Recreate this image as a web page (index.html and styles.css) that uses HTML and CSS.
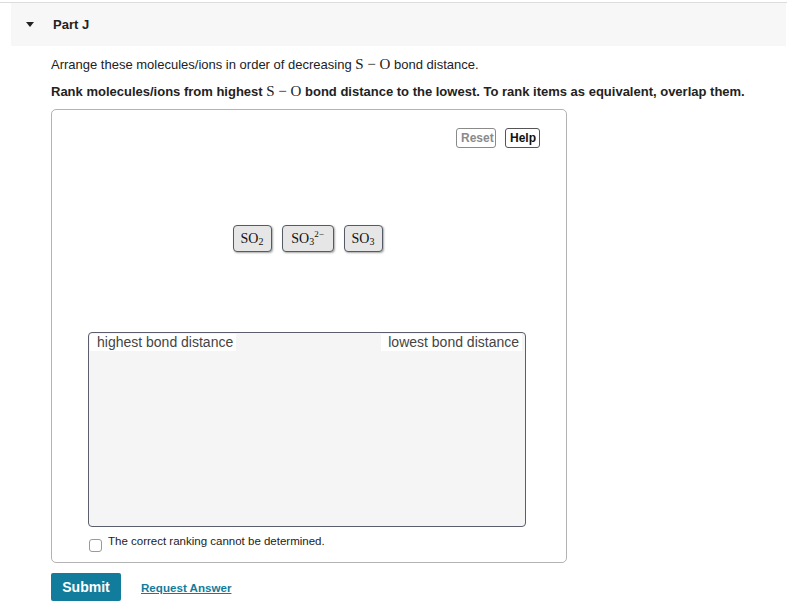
FILE: index.html
```html
<!DOCTYPE html>
<html>
<head>
<meta charset="utf-8">
<link rel="stylesheet" href="styles.css">
</head>
<body>
<div class="part">
  <div class="part-header">
    <span class="caret"></span>
    <span class="part-title">Part J</span>
  </div>
  <div class="part-body">
    <p class="prompt">Arrange these molecules/ions in order of decreasing <span class="math">S − O</span> bond distance.</p>
    <p class="instr">Rank molecules/ions from highest <span class="math">S − O</span> bond distance to the lowest. To rank items as equivalent, overlap them.</p>
    <div class="panel">
      <div class="tools">
        <button class="tool reset">Reset</button>
        <button class="tool help">Help</button>
      </div>
      <div class="tiles">
        <div class="tile w40"><span>SO<sub>2</sub></span></div>
        <div class="tile w53"><span>SO<sub>3</sub><sup>2−</sup></span></div>
        <div class="tile w40"><span>SO<sub>3</sub></span></div>
      </div>
      <div class="rank">
        <div class="rank-labels">
          <span class="lbl">highest bond distance</span>
          <span class="lbl">lowest bond distance</span>
        </div>
      </div>
      <label class="check">
        <span class="box"></span>
        <span>The correct ranking cannot be determined.</span>
      </label>
    </div>
    <div class="actions">
      <button class="submit">Submit</button>
      <a class="request" href="#">Request Answer</a>
    </div>
  </div>
</div>
</body>
</html>
```
FILE: styles.css
```css
html, body {
  margin: 0;
  padding: 0;
  background: #fff;
  font-family: "Liberation Sans", Arial, sans-serif;
  color: #222;
}
body {
  padding-top: 2px;
}
.part {
  border-top: 1px solid #dcdcdc;
}
.part-header {
  margin-left: 11px;
  margin-right: 1px;
  height: 43px;
  background: #f7f7f7;
  display: flex;
  align-items: center;
  padding-left: 15px;
}
.caret {
  width: 0;
  height: 0;
  border-left: 4.5px solid transparent;
  border-right: 4.5px solid transparent;
  border-top: 5px solid #222;
}
.part-title {
  margin-left: 19px;
  font-weight: bold;
  font-size: 13px;
  color: #222;
  margin-top: -1px;
}
.part-body {
  padding-left: 51px;
}
.prompt {
  margin: 10px 0 0 0;
  font-size: 13px;
  line-height: 16px;
  color: #222;
}
.instr {
  margin: 10px 0 0 0;
  font-size: 13px;
  line-height: 16px;
  font-weight: bold;
  color: #222;
}
.math {
  font-family: "Liberation Serif", "Times New Roman", serif;
  font-weight: normal;
  font-size: 15px;
}
.panel {
  margin-top: 9px;
  width: 514px;
  height: 452px;
  border: 1px solid #b3b3b3;
  border-radius: 5px;
  display: flex;
  flex-direction: column;
}
.tools {
  display: flex;
  justify-content: flex-end;
  gap: 9px;
  padding: 18px 26px 0 0;
}
.tool {
  font-family: "Liberation Sans", Arial, sans-serif;
  font-weight: bold;
  font-size: 12px;
  height: 20px;
  padding: 0 4px;
  background: #fff;
  border-radius: 3px;
  line-height: 17px;
}
.reset {
  color: #8a8a8a;
  border: 1px solid #8a8a8a;
  width: 40px;
}
.help {
  color: #111;
  border: 1px solid #555;
  width: 35px;
}
.tiles {
  display: flex;
  justify-content: center;
  gap: 10px;
  margin-top: 77px;
  padding-right: 3px;
}
.tile {
  height: 25px;
  border: 1.5px solid #555b66;
  border-radius: 4px;
  background: #e6e6e6;
  box-shadow: 1px 1px 2px rgba(0,0,0,0.35);
  font-family: "Liberation Serif", "Times New Roman", serif;
  font-size: 14px;
  color: #111;
  display: flex;
  align-items: center;
  justify-content: center;
  box-sizing: content-box;
}
.tile sub {
  font-size: 10px;
  vertical-align: -2px;
  line-height: 0;
}
.tile sup {
  font-size: 9px;
  vertical-align: 6px;
  line-height: 0;
}
.w40 { width: 37px; }
.w53 { width: 50px; }
.rank {
  margin: 80px 0 0 36px;
  width: 436px;
  height: 193px;
  border: 1.5px solid #5a5f6b;
  border-radius: 4px;
  background: #f5f5f5;
}
.rank-labels {
  display: flex;
  justify-content: space-between;
  padding: 1px 3px 0 1px;
}
.lbl {
  background: #fff;
  font-size: 14px;
  line-height: 17px;
  color: #444;
  padding: 0 3px 0 7px;
}
.check {
  display: flex;
  align-items: flex-start;
  margin: 8px 0 0 37px;
  font-size: 11.5px;
  color: #222;
  gap: 6px;
}
.box {
  width: 11px;
  height: 11px;
  border: 1px solid #9a9a9a;
  border-radius: 3px;
  margin-top: 4px;
  background: #fff;
}
.actions {
  display: flex;
  align-items: center;
  margin-top: 10px;
  gap: 20px;
}
.submit {
  width: 70px;
  height: 28px;
  background: #127c9c;
  border: none;
  border-radius: 2px;
  color: #fff;
  font-family: "Liberation Sans", Arial, sans-serif;
  font-weight: bold;
  font-size: 14px;
}
.request {
  color: #127c9c;
  font-weight: bold;
  font-size: 11.6px;
  text-decoration: underline;
}
```
